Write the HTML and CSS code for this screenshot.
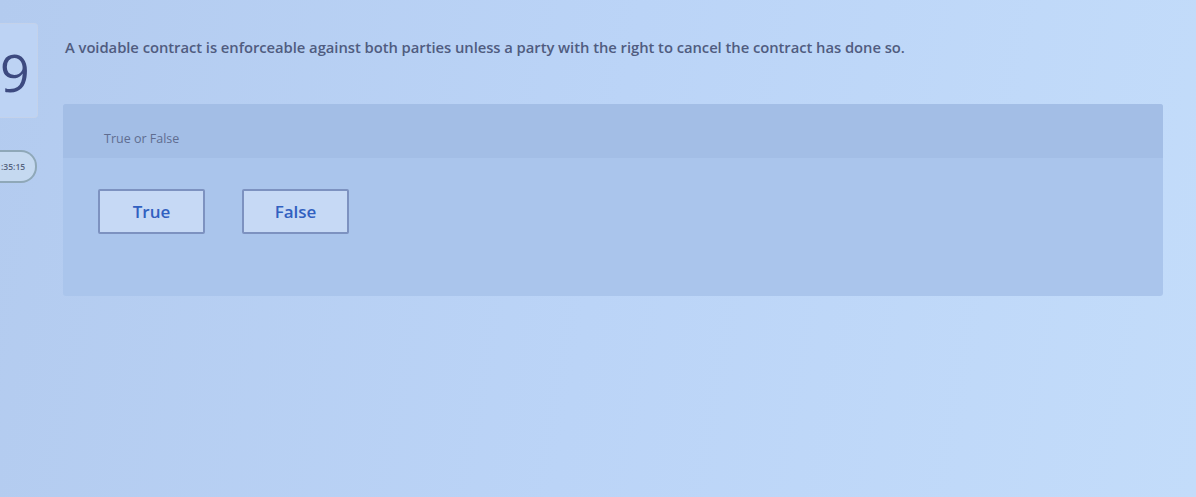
FILE: index.html
```html
<!DOCTYPE html>
<html>
<head>
<meta charset="utf-8">
<link rel="stylesheet" href="styles.css">
</head>
<body>
<div class="page">
  <aside class="side">
    <div class="qnum">9</div>
    <div class="timer">:35:15</div>
  </aside>
  <main class="main">
    <p class="question">A voidable contract is enforceable against both parties unless a party with the right to cancel the contract has done so.</p>
    <section class="panel">
      <div class="panel-head">True or False</div>
      <div class="panel-body">
        <button class="choice">True</button>
        <button class="choice">False</button>
      </div>
    </section>
  </main>
</div>
</body>
</html>
```
FILE: styles.css
```css
html, body {
  margin: 0;
  padding: 0;
}
body {
  width: 1196px;
  height: 497px;
  overflow: hidden;
  background: linear-gradient(100deg, #b3cbef 0%, #bbd4f7 50%, #c3dcfa 100%);
  font-family: "Open Sans", Lato, sans-serif;
  color: #4b587c;
}
.page {
  display: flex;
  height: 100%;
}
.side {
  width: 38px;
  flex: none;
  display: flex;
  flex-direction: column;
  padding-top: 23px;
}
.qnum {
  height: 95px;
  width: 38px;
  border: 1px solid #c4d2ea;
  border-left: none;
  border-radius: 0 4px 4px 0;
  background: #bdd3f4;
  font-family: "Open Sans", sans-serif;
  font-weight: 400;
  font-size: 52px;
  line-height: 95px;
  color: #3d4a80;
  text-align: left;
  padding-left: 0;
  box-sizing: border-box;
  overflow: hidden;
}
.timer {
  margin-top: 32px;
  width: 37px;
  height: 33px;
  box-sizing: border-box;
  border: 2px solid #8fa8b8;
  border-left: none;
  border-radius: 0 16px 16px 0;
  background: #c5d9f0;
  font-size: 8.5px;
  font-weight: 600;
  line-height: 29px;
  color: #56647e;
  text-align: left;
  padding-left: 1px;
}
.main {
  flex: 1;
  padding-left: 25px;
}
.question {
  margin: 37px 0 0 2px;
  font-size: 14.8px;
  font-weight: 600;
  color: #505c80;
  letter-spacing: -0.05px;
}
.panel {
  margin-top: 47px;
  width: 1100px;
  height: 192px;
  border-radius: 3px;
  background: #aac5ec;
  overflow: hidden;
}
.panel-head {
  height: 54px;
  background: #a3bee6;
  box-sizing: border-box;
  padding: 26px 0 0 41px;
  font-size: 12.5px;
  color: #5f6d90;
}
.panel-body {
  display: flex;
  gap: 37px;
  padding: 31px 0 0 35px;
}
.choice {
  width: 107px;
  height: 45px;
  border: 2px solid #7d92c0;
  border-radius: 2px;
  background: #c6d9f5;
  font-family: "Open Sans", Lato, sans-serif;
  font-size: 17px;
  font-weight: 600;
  color: #3160c0;
  padding: 0;
}
```
